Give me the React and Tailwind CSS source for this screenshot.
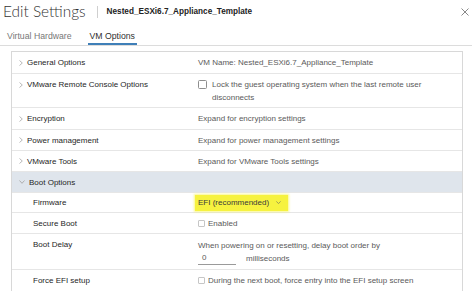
import React from "react";

// chevron pointing right (collapsed) or down (expanded)
function Chevron({ open = false }) {
  if (open) {
    return (
      <svg width="6" height="4" viewBox="0 0 6 4" className="shrink-0">
        <path d="M0.5 0.5 L3 3.3 L5.5 0.5" fill="none" stroke="#a8a8a8" strokeWidth="0.9" />
      </svg>
    );
  }
  return (
    <svg width="4" height="6" viewBox="0 0 4 6" className="shrink-0">
      <path d="M0.5 0.5 L3.3 3 L0.5 5.5" fill="none" stroke="#b0b0b0" strokeWidth="0.9" />
    </svg>
  );
}

function Checkbox({ big = false }) {
  return big ? (
    <span className="shrink-0 w-[9px] h-[9px] mt-[2px] border border-[#8e8e8e] rounded-[1.5px] bg-white" />
  ) : (
    <span className="shrink-0 w-[7px] h-[7px] border border-[#c6c6c6] rounded-[1px] bg-white" />
  );
}

function Row({ h, label, sub, children, top = false, open = false, className = "" }) {
  return (
    <div className={`flex border-b border-[#e6e6e6] ${h} ${top ? "items-start pt-[4px]" : "items-center"} ${className}`}>
      <div className={`w-[186px] shrink-0 flex items-center gap-[4px] ${sub ? "pl-[21px]" : "pl-[7px]"} ${top ? "h-[13px]" : ""}`}>
        {!sub && <Chevron open={open} />}
        <span className="text-[8px] leading-[13px] text-[#262626]">{label}</span>
      </div>
      <div className="flex-1 min-w-0 pr-[12px] text-[8px] leading-[13px] text-[#5a5a5a]">{children}</div>
    </div>
  );
}

export default function App() {
  return (
    <div
      className="w-[474px] h-[291px] overflow-hidden bg-white"
      style={{ fontFamily: '"Liberation Sans", Arial, sans-serif' }}
    >
      {/* header */}
      <div className="flex items-center h-[24px] pl-[3px] pr-[5px]">
        <h1
          className="text-[15.4px] font-light text-[#333] leading-none"
          style={{ fontFamily: 'Lato, "Liberation Sans", sans-serif' }}
        >
          Edit Settings
        </h1>
        <div className="w-px h-[12px] bg-[#cfcfcf] ml-[11px] mr-[9px]" />
        <span className="text-[8.2px] font-bold text-[#222]">Nested_ESXi6.7_Appliance_Template</span>
        <svg width="8" height="8" viewBox="0 0 8 8" className="ml-auto">
          <path d="M0.5 0.5 L7.5 7.5 M7.5 0.5 L0.5 7.5" stroke="#7a7a7a" strokeWidth="0.9" />
        </svg>
      </div>

      {/* tabs */}
      <div className="flex h-[22px] border-b border-[#dcdcdc] pl-[5px] gap-[14px] mr-[2px]">
        <div className="h-full flex items-center pt-[7px] px-[2px] border-b-2 border-transparent text-[8.7px] text-[#777]">
          Virtual Hardware
        </div>
        <div className="h-full flex items-center pt-[7px] px-[2px] border-b-2 border-[#3f7fb8] text-[8.7px] text-[#2f2f2f]">
          VM Options
        </div>
      </div>

      {/* options panel */}
      <div className="mt-[5px] ml-[11px] w-[452px] border border-b-0 border-[#d8d8d8]">
        <Row h="h-[22px]" label="General Options">
          VM Name: Nested_ESXi6.7_Appliance_Template
        </Row>
        <Row h="h-[34px]" label="VMware Remote Console Options" top>
          <div className="flex gap-[5px]">
            <Checkbox big />
            <span>Lock the guest operating system when the last remote user disconnects</span>
          </div>
        </Row>
        <Row h="h-[22px]" label="Encryption">Expand for encryption settings</Row>
        <Row h="h-[21px]" label="Power management">Expand for power management settings</Row>
        <Row h="h-[21px]" label="VMware Tools">Expand for VMware Tools settings</Row>
        <Row h="h-[21px]" label="Boot Options" open className="bg-[#dfe5ec]" />
        <Row h="h-[20px]" label="Firmware" sub>
          <span className="inline-flex items-center gap-[7px] h-[16px] ml-[-3px] pl-[3px] pr-[7px] bg-[#f6f23f] shadow-[0_0_2px_1px_rgba(246,242,63,0.6)] text-[#3a3a3a]">
            EFI (recommended)
            <svg width="5" height="3" viewBox="0 0 5 3">
              <path d="M0.4 0.4 L2.5 2.6 L4.6 0.4" fill="none" stroke="#8a8a5a" strokeWidth="0.8" />
            </svg>
          </span>
        </Row>
        <Row h="h-[21px]" label="Secure Boot" sub>
          <div className="flex items-center gap-[3px]">
            <Checkbox />
            <span>Enabled</span>
          </div>
        </Row>
        <Row h="h-[36px]" label="Boot Delay" sub top>
          <div className="pt-[1px]">When powering on or resetting, delay boot order by</div>
          <div className="flex items-center">
            <div className="w-[38px] h-[13px] pl-[4px] border-b border-[#9a9a9a] leading-[12px]">0</div>
            <span className="ml-[10px]">milliseconds</span>
          </div>
        </Row>
        <Row h="h-[22px]" label="Force EFI setup" sub>
          <div className="flex items-center gap-[3px]">
            <Checkbox />
            <span>During the next boot, force entry into the EFI setup screen</span>
          </div>
        </Row>
      </div>
    </div>
  );
}
